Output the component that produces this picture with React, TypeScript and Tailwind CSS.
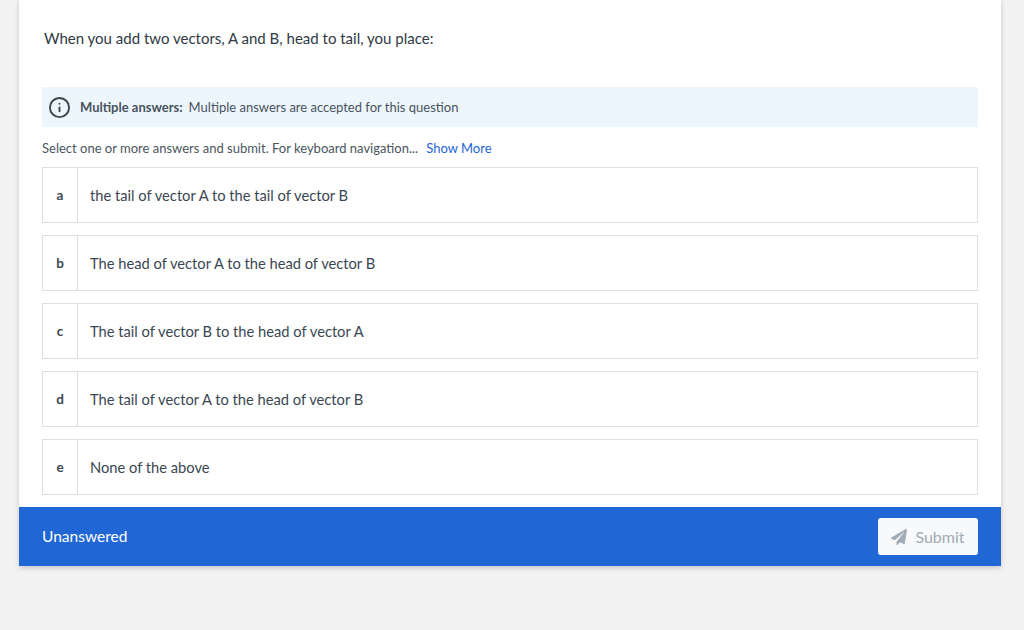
import React from "react";
import { Info } from "lucide-react";
import { FaPaperPlane } from "react-icons/fa";

const options = [
  { key: "a", text: "the tail of vector A to the tail of vector B" },
  { key: "b", text: "The head of vector A to the head of vector B" },
  { key: "c", text: "The tail of vector B to the head of vector A" },
  { key: "d", text: "The tail of vector A to the head of vector B" },
  { key: "e", text: "None of the above" },
];

const App: React.FC = () => {
  return (
    <div
      className="min-h-[630px] w-full bg-[#f2f2f2]"
      style={{ fontFamily: "Lato, 'Open Sans', sans-serif" }}
    >
      <div className="ml-[19px] w-[982px] bg-white shadow-[0_2px_5px_rgba(0,0,0,0.18)]">
        <div className="px-[23px]">
          {/* question */}
          <div className="pt-[28px] pl-[2px] text-[15px] leading-[20px] text-[#2f3a45]">
            When you add two vectors, A and B, head to tail, you place:
          </div>

          {/* info banner */}
          <div className="mt-[39px] flex h-[40px] items-center gap-[9px] bg-[#eef6fd] px-[6px]">
            <Info size={23} strokeWidth={2} className="text-[#3d4650]" />
            <span className="pt-[2px] text-[13px] text-[#48535e]">
              <span className="font-bold">Multiple answers:</span>
              <span className="ml-[6px]">Multiple answers are accepted for this question</span>
            </span>
          </div>

          {/* instructions */}
          <div className="mt-[13px] text-[13px] leading-[16px] text-[#4a5560]">
            Select one or more answers and submit. For keyboard navigation...
            <button type="button" className="ml-[8px] text-[#1d64d2]">
              Show More
            </button>
          </div>

          {/* options */}
          <div className="mt-[11px] flex flex-col gap-[12px] pb-[12px]">
            {options.map((opt) => (
              <div
                key={opt.key}
                className="flex h-[56px] border border-[#dcdfe4] bg-white"
              >
                <div className="flex w-[35px] items-center justify-center border-r border-[#dcdfe4] text-[13.5px] font-bold text-[#3d4752]">
                  {opt.key}
                </div>
                <div className="flex items-center pl-[12px] text-[14.7px] text-[#3a4753]">
                  {opt.text}
                </div>
              </div>
            ))}
          </div>
        </div>

        {/* footer */}
        <div className="flex h-[59px] items-center justify-between bg-[#2067d5] px-[23px]">
          <span className="text-[15.5px] text-white">Unanswered</span>
          <button
            type="button"
            className="flex h-[37px] w-[100px] items-center justify-center gap-[8px] rounded-[3px] bg-[#f8f9fa] text-[16px] text-[#9fabb6]"
          >
            <FaPaperPlane size={16} />
            Submit
          </button>
        </div>
      </div>
    </div>
  );
};

export default App;
